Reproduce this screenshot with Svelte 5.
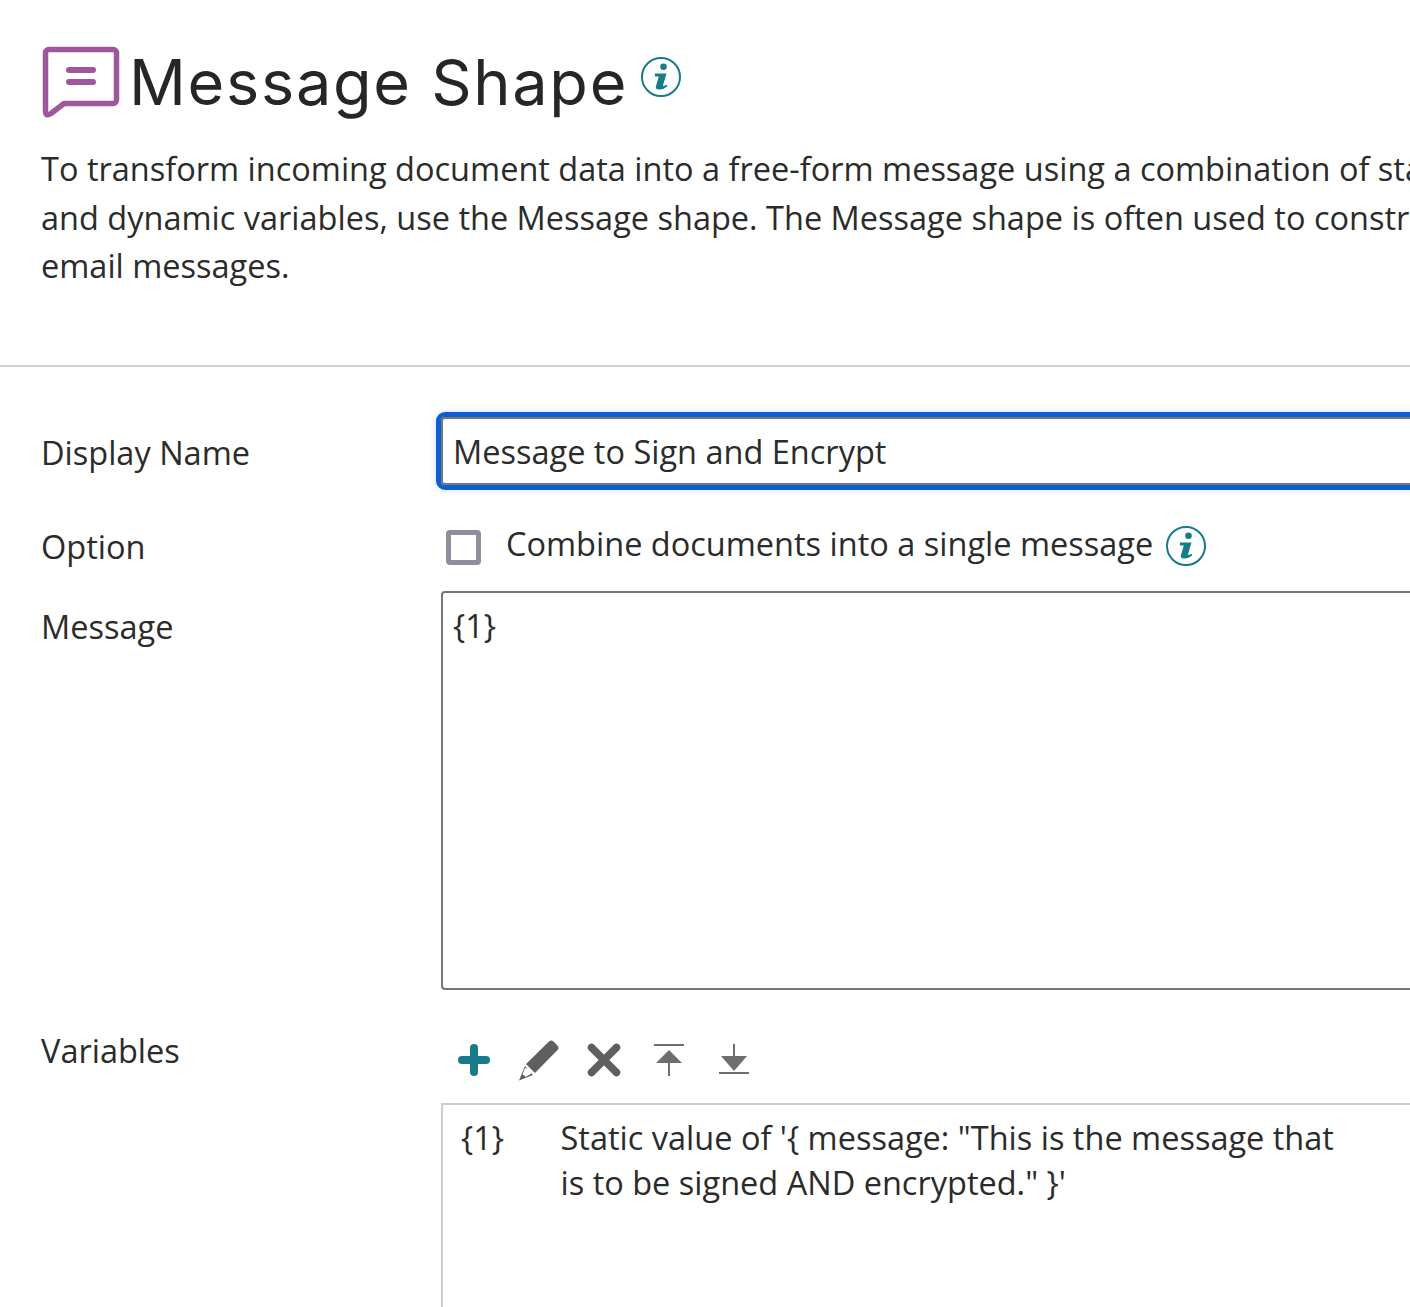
<script>
  const variables = [{ key: '{1}', text: `Static value of '{ message: "This is the message that is to be signed AND encrypted." }'` }];
</script>

<div class="page">
  <header class="head">
    <svg class="logo" viewBox="0 0 78 72" width="78" height="72" aria-hidden="true">
      <path d="M7 3.500h64a3.500 3.500 0 0 1 3.500 3.500v47a3.500 3.500 0 0 1-3.500 3.500H22L9 67.500Q3.500 71 3.500 65V7A3.500 3.500 0 0 1 7 3.500Z" fill="none" stroke="#9e579d" stroke-width="5.500" stroke-linejoin="round"/>
      <path d="M27 24h24M27 36h24" stroke="#9e579d" stroke-width="6" stroke-linecap="round" fill="none"/>
    </svg>
    <h1>Message Shape</h1>
    <svg class="info top" viewBox="0 0 40 40" width="40" height="40" aria-hidden="true">
      <circle cx="20" cy="20" r="19" fill="none" stroke="#177b89" stroke-width="2"/>
      <circle cx="22.500" cy="9.700" r="3.300" fill="#177b89"/>
      <path d="M14 16.500h11.500l-3.400 11.500q-.3 1.200.8 1l2.700-1.200.7 1.600q-3.500 2.700-7.600 3.100-4.600.3-3.800-3.200l2.900-9.800h-3.900Z" fill="#177b89"/>
    </svg>
  </header>
  <p class="desc">To transform incoming document data into a free-form message using a combination of static text and dynamic variables, use the Message shape. The Message shape is often used to construct email messages.</p>
  <hr />
  <div class="form">
    <div class="label name">Display Name</div>
    <div class="input">Message to Sign and Encrypt</div>

    <div class="label opt">Option</div>
    <div class="option">
      <span class="check"></span>
      <span>Combine documents into a single message</span>
      <svg class="info" viewBox="0 0 40 40" width="40" height="40" aria-hidden="true">
        <circle cx="20" cy="20" r="19" fill="none" stroke="#177b89" stroke-width="2"/>
        <circle cx="22.500" cy="9.700" r="3.300" fill="#177b89"/>
        <path d="M14 16.500h11.500l-3.400 11.500q-.3 1.200.8 1l2.700-1.200.7 1.600q-3.500 2.700-7.600 3.100-4.600.3-3.800-3.200l2.900-9.800h-3.900Z" fill="#177b89"/>
      </svg>
    </div>

    <div class="label msg">Message</div>
    <div class="textarea">{'{1}'}</div>

    <div class="label vars">Variables</div>
    <div class="varcol">
      <div class="toolbar">
        <svg viewBox="0 0 34 34" width="34" height="34" aria-hidden="true"><path d="M17 5v24M5 17h24" stroke="#177b89" stroke-width="8" stroke-linecap="round"/></svg>
        <svg viewBox="0 0 42 42" width="42" height="42" aria-hidden="true"><path d="M8 25 31 2.500q2-2 4.500 0l4 4q2 2.500 0 4.500L17 34Z" fill="#5f5f5f"/><path d="M7 27 1 41.500 15 36Z" fill="#5f5f5f"/><path d="M7 29q5 .5 6.500 5.500l-6 3.500q-1-2-3-2.500Z" fill="#fff"/></svg>
        <svg class="x" viewBox="0 0 34 34" width="34" height="34" aria-hidden="true"><path d="M4.500 4.500l25 25M29.500 4.500l-25 25" stroke="#5f5f5f" stroke-width="7.500" stroke-linecap="round"/></svg>
        <svg class="up" viewBox="0 0 32 34" width="32" height="34" aria-hidden="true"><path d="M1 2h30" stroke="#6e6e6e" stroke-width="2"/><path d="M16 7 29 20H3Z" fill="#6e6e6e"/><path d="M16 18v15" stroke="#6e6e6e" stroke-width="2"/></svg>
        <svg viewBox="0 0 32 34" width="32" height="34" aria-hidden="true"><path d="M16 1v15" stroke="#6e6e6e" stroke-width="2"/><path d="M16 28 3 13h26Z" fill="#6e6e6e"/><path d="M1 30h30" stroke="#6e6e6e" stroke-width="2"/></svg>
      </div>
      <div class="list">
        {#each variables as v}
          <div class="var">
            <span class="key">{v.key}</span>
            <span class="val">{v.text}</span>
          </div>
        {/each}
      </div>
    </div>
  </div>
</div>

<style>
  :global(html), :global(body) { margin: 0; overflow: hidden; background: #fff; }
  .page {
    width: 1410px;
    height: 1307px;
    overflow: hidden;
    font-family: "Open Sans", sans-serif;
    font-size: 32.500px;
    color: #2b2b2b;
  }
  .head {
    display: flex;
    align-items: flex-start;
    padding: 46px 0 0 42px;
    height: 100px;
    box-sizing: border-box;
  }
  .logo { flex: none; }
  h1 {
    margin: 0 0 0 9px;
    font-family: Inter, sans-serif;
    font-weight: 400;
    font-size: 63px;
    line-height: 72px;
    letter-spacing: 1.700px;
    color: #262626;
    white-space: nowrap;
  }
  .info { flex: none; }
  .info.top { margin: 11px 0 0 13px; }
  .desc {
    margin: 0 0 0 41px;
    width: 1495px;
    line-height: 48.500px;
    padding-top: 45px;
  }
  hr {
    border: 0;
    border-top: 2px solid #cfcfcf;
    margin: 74px 0 0;
    width: 1410px;
  }
  .form {
    display: grid;
    grid-template-columns: 400px 1600px;
    margin-left: 41px;
    padding-top: 45px;
  }
  .label { line-height: 48px; }
  .name { padding-top: 17px; }
  .input {
    box-sizing: border-box;
    height: 78px;
    margin-left: -5px;
    border: 5px solid #0b5fd3;
    border-radius: 9px;
    box-shadow: inset 0 0 0 2px #777, 0 0 6px rgba(11, 95, 211, 0.2);
    padding: 0 12px;
    line-height: 70px;
    white-space: nowrap;
  }
  .opt { padding-top: 33px; }
  .option {
    display: flex;
    align-items: center;
    padding: 32px 0 0 5px;
    height: 44px;
  }
  .check {
    box-sizing: border-box;
    width: 35px;
    height: 35px;
    border: 5px solid #8e8e9c;
    border-radius: 4px;
    margin-right: 25px;
    margin-top: 8px;
  }
  .option .info { margin: 4px 0 0 13px; }
  .msg { padding-top: 32px; }
  .textarea {
    box-sizing: border-box;
    height: 399px;
    margin-top: 20px;
    border: 2px solid #767676;
    border-radius: 4px;
    padding: 9px 10px;
    line-height: 48px;
  }
  .vars { padding-top: 37px; }
  .varcol { padding-top: 27px; }
  .toolbar {
    display: flex;
    align-items: center;
    gap: 27px;
    height: 86px;
    padding-left: 16px;
    box-sizing: border-box;
  }
  .x { margin-right: 5px; }
  .up { margin-right: 6px; }
  .list {
    box-sizing: border-box;
    border: 2px solid #cdcdcd;
    height: 300px;
    padding: 10px 18px;
  }
  .var { display: flex; }
  .key { width: 99.500px; flex: none; line-height: 45px; }
  .val { width: 790px; line-height: 45px; }
</style>
